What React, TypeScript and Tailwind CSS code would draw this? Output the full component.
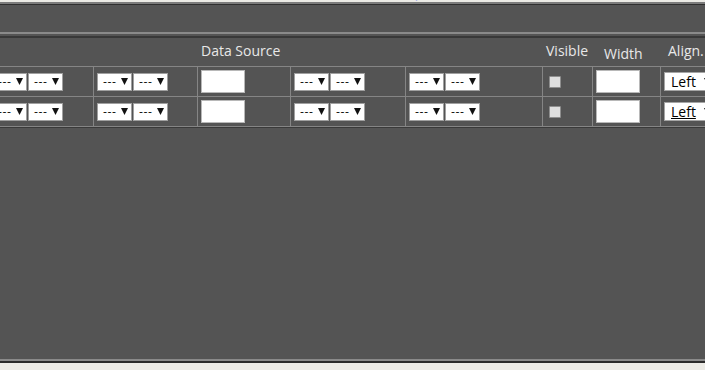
import type { ReactNode } from "react";

const cellBorder = "border-r border-[#858585]";

export default function App() {
  return (
    <div className="flex h-[370px] w-[705px] flex-col overflow-hidden bg-[#545454] font-['Open_Sans',sans-serif]">
      <TopStrip />
      <div className="h-[2px] bg-[#7c7c7c]" />
      <div className="h-[1px] bg-[#2f2f2f]" />
      <div className="h-[27px]" />
      <div className="h-[2px] bg-[#8a8a8a]" />
      <div className="h-[2px]" />
      <div className="h-[2px] bg-[#383838]" />

      <div className="-ml-[11px] flex flex-col">
        <HeaderRow />
        <DataRow />
        <DataRow underline />
        <div className="h-[1px] bg-[#3a3a3a]" />
      </div>

      <div className="flex-1" />
      <div className="h-[2px] bg-[#8a8a8a]" />
      <div className="h-[2px] bg-[#2b2b2b]" />
      <div className="h-[7px] bg-[#ecebe6]" />
    </div>
  );
}

// bottoms of a text line that sits above the visible area
function TopStrip() {
  return (
    <div className="h-[2px] bg-[#ecebe6]">
      <div className="flex h-[1px] overflow-hidden font-['DejaVu_Sans',sans-serif] text-[11px] leading-[11px] text-[#9aa6ec]">
        <span className="ml-[403px] -mt-[9px]">u y' a</span>
        <span className="ml-[24px] -mt-[9px]">llullu ullu</span>
        <span className="ml-[96px] -mt-[9px]">u ll uu u</span>
      </div>
    </div>
  );
}

function HeaderRow() {
  return (
    <div className="flex h-[29px] border-b border-[#858585] text-[14px] leading-none text-[#e8e8e8]">
      <div className="w-[554px] shrink-0 pl-[212px] pt-[6px]">Data Source</div>
      <div className="w-[50px] shrink-0 pl-[3px] pt-[6px]">Visible</div>
      <div className="w-[68px] shrink-0 pl-[11px] pt-[9px]">Width</div>
      <div className="flex-1 pl-[7px] pt-[6px]">Align.</div>
    </div>
  );
}

function DataRow({ underline = false }: { underline?: boolean }) {
  return (
    <div className="flex h-[30px] border-b border-[#858585]">
      <Cell width="w-[105px]">
        <SelectPair />
      </Cell>
      <Cell width="w-[104px]">
        <SelectPair />
      </Cell>
      <Cell width="w-[93px]">
        <TextBox />
      </Cell>
      <Cell width="w-[115px]">
        <SelectPair />
      </Cell>
      <Cell width="w-[137px]">
        <SelectPair />
      </Cell>
      <Cell width="w-[50px]" pad="pl-[6px]">
        <div className="h-[12px] w-[12px] rounded-[1px] border border-[#8e8e8e] bg-[#dedede]" />
      </Cell>
      <Cell width="w-[68px]">
        <TextBox />
      </Cell>
      <div className="flex flex-1 items-center pl-[3px]">
        <div className="flex h-[19px] w-[60px] items-center border border-[#a5a5a5] bg-white pl-[6px] font-['Open_Sans',sans-serif] text-[14px] text-black">
          <span className={underline ? "underline decoration-black decoration-1 underline-offset-[1px]" : ""}>Left</span>
          <Arrow className="ml-[8px]" />
        </div>
      </div>
    </div>
  );
}

function Cell({ width, pad = "pl-[3px]", children }: { width: string; pad?: string; children: ReactNode }) {
  return <div className={[width, "flex shrink-0 items-center", pad, cellBorder].join(" ")}>{children}</div>;
}

function SelectPair() {
  return (
    <div className="flex gap-[1px]">
      <MiniSelect />
      <MiniSelect />
    </div>
  );
}

function MiniSelect() {
  return (
    <div className="flex h-[18px] w-[35px] items-center border border-[#a0a0a0] bg-white pl-[5px] font-['DejaVu_Sans',sans-serif] text-[11px] leading-none text-black">
      <span className="tracking-[0.5px]">---</span>
      <Arrow className="ml-[5px]" />
    </div>
  );
}

function TextBox() {
  return <div className="h-[23px] w-[44px] border border-[#b8b8b8] bg-white" />;
}

function Arrow({ className = "" }: { className?: string }) {
  return (
    <svg aria-hidden="true" className={["h-[7px] w-[7px] shrink-0", className].join(" ")} viewBox="0 0 7 7">
      <polygon points="0,0 7,0 3.5,7" fill="#111" />
    </svg>
  );
}
